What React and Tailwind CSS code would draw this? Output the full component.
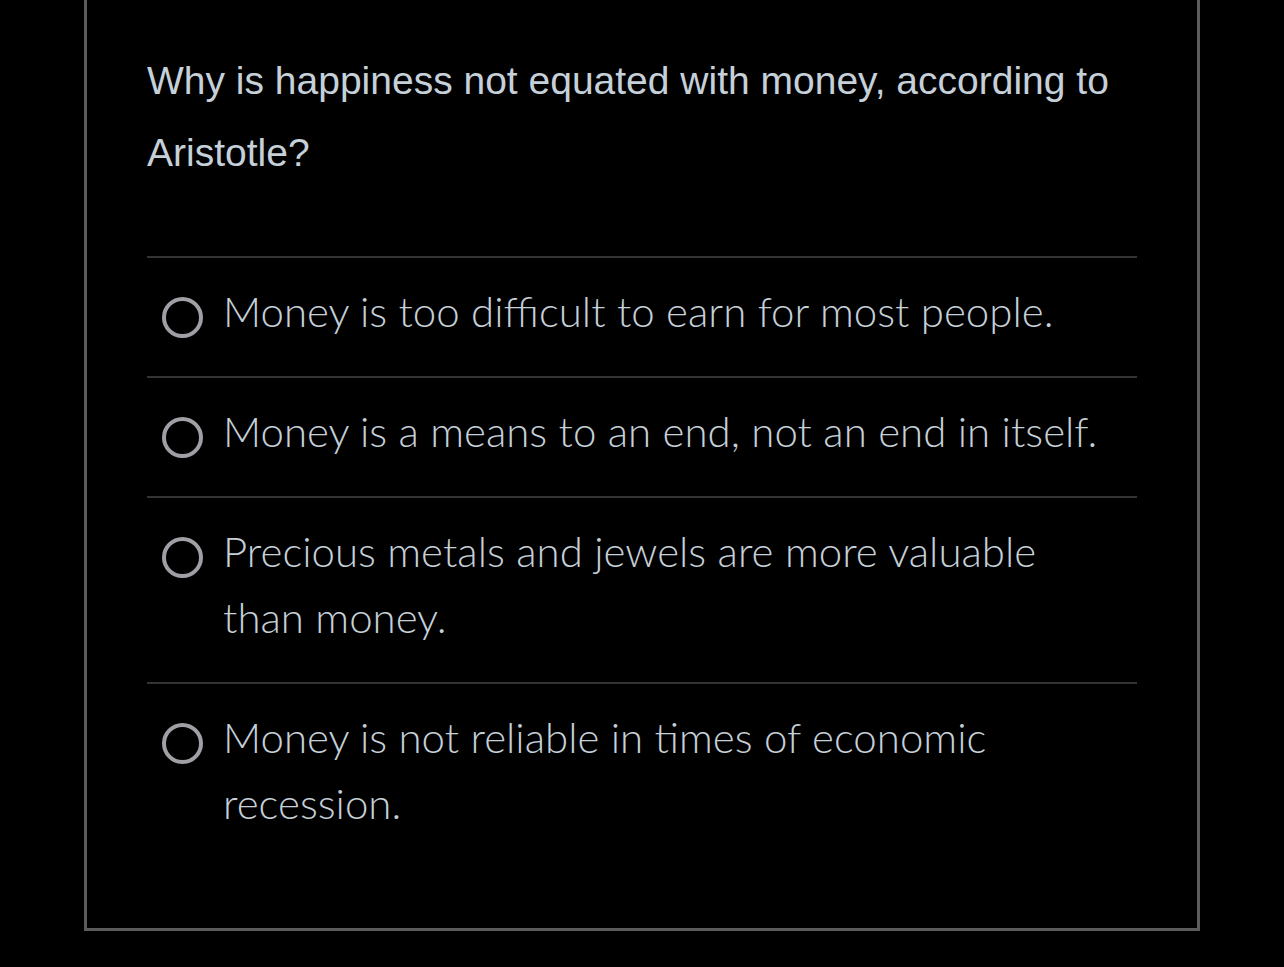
import React from "react";

const options = [
  "Money is too difficult to earn for most people.",
  "Money is a means to an end, not an end in itself.",
  "Precious metals and jewels are more valuable than money.",
  "Money is not reliable in times of economic recession.",
];

function Radio() {
  return (
    <span className="mt-[19px] box-border block h-[41px] w-[41px] shrink-0 rounded-full border-[4px] border-[#a09fa5]" />
  );
}

export default function App() {
  return (
    <div className="h-[967px] w-[1284px] overflow-hidden bg-black">
      <div className="ml-[84px] box-border h-[931px] w-[1116px] border-x-[3px] border-b-[3px] border-[#5c5c5c] px-[60px] pt-[45px]">
        <p className="m-0 text-[39px] leading-[72px] text-[#c5d0d9] [font-family:'Liberation_Sans',Arial,sans-serif]">
          Why is happiness not equated with money, according to Aristotle?
        </p>
        <div className="mt-[67px] border-t-2 border-[#333333]">
          {options.map((o, i) => (
            <div
              key={i}
              className={
                i < options.length - 1
                  ? "flex items-start gap-[20px] border-b-2 border-[#333333] pt-[20px] pb-[32px] pl-[15px] pr-[25px]"
                  : "flex items-start gap-[20px] pt-[20px] pb-[32px] pl-[15px] pr-[25px]"
              }
            >
              <Radio />
              <span className="text-[42px] font-light leading-[66px] text-[#c5d0d9] [font-family:'Lato_Light',Lato,sans-serif]">
                {o}
              </span>
            </div>
          ))}
        </div>
      </div>
    </div>
  );
}
